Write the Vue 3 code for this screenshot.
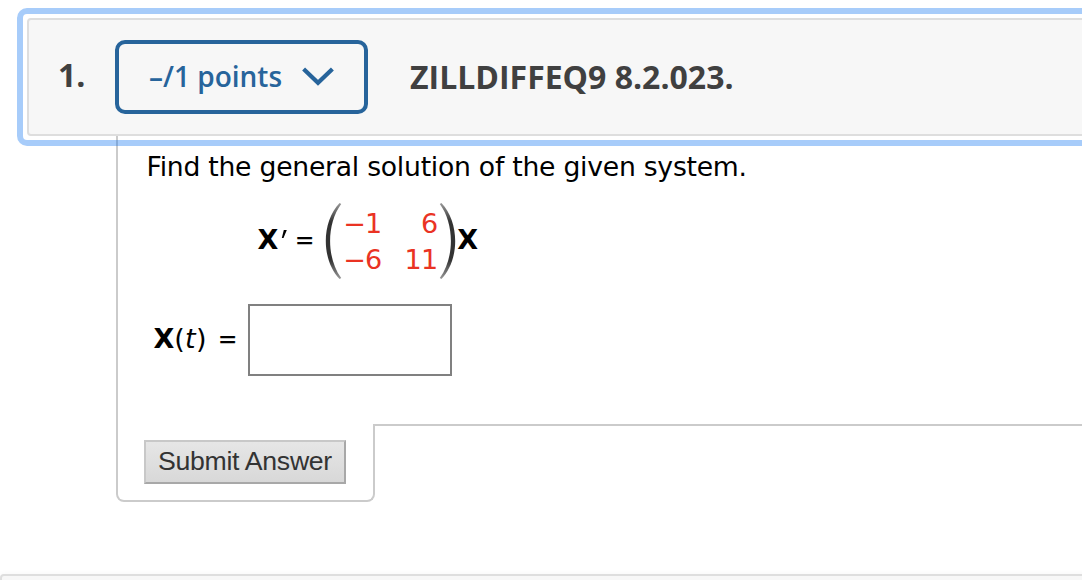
<template>
  <div class="assignment">
    <section class="question">
      <header class="question-header">
        <span class="question-number">{{ question.number }}.</span>
        <button class="points-button" type="button">
          <span class="points-text">{{ question.points }}</span>
          <svg class="chevron" width="34" height="22" viewBox="0 0 34 22">
            <path d="M2.6 4 L17 17.8 L31.4 4" fill="none" stroke="#27649b" stroke-width="4.2" />
          </svg>
        </button>
        <h2 class="question-title">{{ question.title }}</h2>
      </header>

      <div class="question-body">
        <p class="prompt">{{ question.prompt }}</p>

        <div class="equation">
          <b class="big-x">X</b>
          <svg class="prime" width="6" height="10" viewBox="0 0 6 10">
            <path d="M2.8 0 H5.8 L2.5 8 H0.8 Z" />
          </svg>
          <span class="equals">=</span>
          <svg class="paren" width="18" height="78" viewBox="0 0 18 78">
            <defs>
              <linearGradient id="paren-fade" x1="0" y1="0" x2="0" y2="1">
                <stop offset="0" stop-color="#999" />
                <stop offset="0.25" stop-color="#333" />
                <stop offset="0.75" stop-color="#333" />
                <stop offset="1" stop-color="#999" />
              </linearGradient>
            </defs>
            <path d="M15.6 1 C-2.8 20 -2.8 58 15.6 77 L17.2 76 C2.4 56 2.4 22 17.2 2 Z" fill="url(#paren-fade)" />
          </svg>
          <div class="matrix">
            <div v-for="(row, i) in matrix" :key="i" class="matrix-row">
              <span v-for="(cell, j) in row" :key="j" class="matrix-cell">{{ cell }}</span>
            </div>
          </div>
          <svg class="paren flipped" width="18" height="78" viewBox="0 0 18 78">
            <path d="M15.6 1 C-2.8 20 -2.8 58 15.6 77 L17.2 76 C2.4 56 2.4 22 17.2 2 Z" fill="url(#paren-fade)" />
          </svg>
          <b class="big-x">X</b>
        </div>

        <div class="answer">
          <label class="answer-label" for="answer"><b>X</b>(<i>t</i>)</label>
          <span class="equals">=</span>
          <input id="answer" v-model="answer" class="answer-input" type="text" />
        </div>
      </div>

      <footer class="question-footer">
        <div class="submit-tab">
          <button class="submit-button" type="button">Submit Answer</button>
        </div>
        <div class="footer-line"></div>
      </footer>
    </section>

    <div class="next-question"></div>
  </div>
</template>

<script setup>
import { ref } from 'vue'

const question = {
  number: 1,
  points: '–/1 points',
  title: 'ZILLDIFFEQ9 8.2.023.',
  prompt: 'Find the general solution of the given system.'
}

const matrix = [
  ['−1', '6'],
  ['−6', '11']
]

const answer = ref('')
</script>

<style>
body {
  margin: 0;
  background: #fff;
  overflow: hidden;
}
</style>

<style scoped>
.assignment {
  display: flex;
  flex-direction: column;
  box-sizing: border-box;
  height: 580px;
  padding-top: 18px;
  overflow: hidden;
  font-family: Verdana, "DejaVu Sans", sans-serif;
  font-size: 27px;
  color: #000;
}

.question {
  flex: none;
  height: 556px;
}

/* Header */
.question-header {
  position: relative;
  z-index: 1;
  display: flex;
  align-items: center;
  box-sizing: border-box;
  height: 118px;
  margin: 0 -20px 0 27px;
  border: 2px solid #dedede;
  border-radius: 4px;
  background: #f7f7f7;
  font-family: "Open Sans", sans-serif;
  color: #404040;
}

.question-header::after {
  content: "";
  position: absolute;
  inset: -12px;
  border: 6px solid rgba(4, 109, 241, 0.35);
  border-radius: 10px;
  pointer-events: none;
}

.question-number {
  width: 86px;
  box-sizing: border-box;
  padding-left: 29px;
  font-size: 32px;
  font-weight: 700;
  line-height: 44px;
  margin-top: -4px;
}

.points-button {
  display: flex;
  align-items: center;
  box-sizing: border-box;
  width: 253px;
  height: 74px;
  padding: 0 0 0 30px;
  border: 4px solid #27649b;
  border-radius: 10px;
  background: #f7f7f7;
  font-family: inherit;
  font-size: 28px;
  font-weight: 600;
  color: #27649b;
}

.points-text {
  width: 152px;
  margin-top: -2px;
  text-align: left;
  white-space: nowrap;
}

.chevron {
  margin-top: -3px;
}

.question-title {
  margin: 0 0 0 42px;
  font-size: 32px;
  font-weight: 700;
  line-height: 44px;
  white-space: nowrap;
}

/* Body */
.question-body {
  box-sizing: border-box;
  height: 288px;
  margin-left: 116px;
  padding-top: 14px;
  border-left: 2px solid #cbcbcb;
}

.prompt {
  margin: 0;
  padding-left: 28.5px;
  font-size: 26.67px;
  letter-spacing: -0.26px;
  line-height: 34px;
  white-space: nowrap;
}

.equation {
  display: flex;
  align-items: center;
  height: 78px;
  margin: 18px 0 0 139.5px;
}

.big-x {
  width: 21px;
  margin-top: -2px;
  line-height: 34px;
}

.prime {
  margin: -13px 0 0 2.5px;
}

.equals {
  font-size: 23px;
  -webkit-text-stroke: 0.3px #000;
}

.equation .equals {
  margin: -3px 10px 0 8px;
}

.flipped {
  transform: scaleX(-1);
}

.matrix {
  box-sizing: border-box;
  width: 97px;
  padding: 2px 2px 0 1px;
  color: #ea3323;
}

.matrix-row {
  display: flex;
  justify-content: space-between;
  line-height: 36px;
}

.matrix-cell {
  letter-spacing: -0.8px;
}

.answer {
  display: flex;
  align-items: center;
  height: 72px;
  margin: 24px 0 0 35.5px;
}

.answer-label {
  width: 64.5px;
  margin-top: -3px;
  white-space: nowrap;
}

.answer-label i {
  margin-right: 0.5px;
}

.answer .equals {
  margin-top: -3px;
}

.answer-input {
  box-sizing: border-box;
  width: 204px;
  height: 72px;
  margin-left: 10.7px;
  padding: 0 8px;
  border: 2px solid #808080;
  background: #fff;
  font: inherit;
  outline: none;
}

/* Footer */
.question-footer {
  display: flex;
  margin-left: 116px;
}

.submit-tab {
  box-sizing: border-box;
  width: 259px;
  height: 78px;
  padding: 16px 0 0 26px;
  border: 2px solid #cbcbcb;
  border-top: none;
  border-radius: 0 0 8px 8px;
}

.footer-line {
  flex: 1;
  border-top: 2px solid #cbcbcb;
}

.submit-button {
  box-sizing: border-box;
  width: 202px;
  height: 44px;
  padding: 0 0 2px;
  border: 2px solid;
  border-color: #c8c8c8 #a8a8a8 #a8a8a8 #c8c8c8;
  background: linear-gradient(#e6e6e6, #d8d8d8);
  font-family: Arial, "Liberation Sans", sans-serif;
  font-size: 26.67px;
  letter-spacing: -0.3px;
  color: #333;
  white-space: nowrap;
}

.next-question {
  flex: none;
  height: 20px;
  margin-right: -20px;
  border: 2px solid #dedede;
  border-radius: 4px;
  background: #f7f7f7;
  box-shadow: 0 0 6px rgba(0, 0, 0, 0.04);
}
</style>
